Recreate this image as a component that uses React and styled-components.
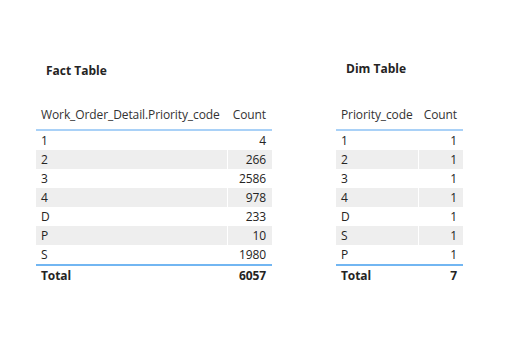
import React from "react";
import styled, { createGlobalStyle } from "styled-components";

const GlobalStyle = createGlobalStyle`
  html, body {
    margin: 0;
    padding: 0;
    background: #ffffff;
  }
  body {
    font-family: "Segoe UI", "Open Sans", "Noto Sans", sans-serif;
    color: #252423;
  }
`;

const factRows = [
  { code: "1", count: 4 },
  { code: "2", count: 266 },
  { code: "3", count: 2586 },
  { code: "4", count: 978 },
  { code: "D", count: 233 },
  { code: "P", count: 10 },
  { code: "S", count: 1980 },
];

const dimRows = [
  { code: "1", count: 1 },
  { code: "2", count: 1 },
  { code: "3", count: 1 },
  { code: "4", count: 1 },
  { code: "D", count: 1 },
  { code: "S", count: 1 },
  { code: "P", count: 1 },
];

// header rows of both tables sit on the same line; only the titles differ
const TableVisual = ({ title, codeLabel, rows, total, width, titleTop }) => (
  <Visual $width={width}>
    <Title $top={titleTop}>{title}</Title>
    <Table $gap={19 + (62 - titleTop)}>
      <thead>
        <tr>
          <HeadCell>{codeLabel}</HeadCell>
          <HeadCell $num>Count</HeadCell>
        </tr>
      </thead>
      <tbody>
        {rows.map((r, i) => (
          <Row key={r.code} $shaded={i % 2 === 1}>
            <Cell>{r.code}</Cell>
            <Cell $num>{r.count}</Cell>
          </Row>
        ))}
      </tbody>
      <tfoot>
        <tr>
          <TotalCell>Total</TotalCell>
          <TotalCell $num>{total}</TotalCell>
        </tr>
      </tfoot>
    </Table>
  </Visual>
);

const App = () => (
  <>
    <GlobalStyle />
    <Page>
      <TableVisual
        title="Fact Table"
        codeLabel="Work_Order_Detail.Priority_code"
        rows={factRows}
        total={6057}
        width={236}
        titleTop={62}
      />
      <TableVisual
        title="Dim Table"
        codeLabel="Priority_code"
        rows={dimRows}
        total={7}
        width={127}
        titleTop={60}
      />
    </Page>
  </>
);

export default App;

const Page = styled.div`
  width: 523px;
  height: 343px;
  display: flex;
  gap: 64px;
  padding-left: 36px;
  box-sizing: border-box;
`;

const Visual = styled.div`
  width: ${(p) => p.$width}px;
  display: flex;
  flex-direction: column;
`;

const Title = styled.div`
  margin-top: ${(p) => p.$top}px;
  margin-left: 10px;
  height: 18px;
  line-height: 18px;
  font-size: 12px;
  font-weight: 700;
  color: #252423;
`;

const Table = styled.table`
  width: 100%;
  margin-top: ${(p) => p.$gap}px;
  border-collapse: collapse;
  font-size: 12px;
  letter-spacing: -0.1px;
  tr > * {
    padding: 0 3px 0 5px;
    white-space: nowrap;
  }
  tr > *:last-child {
    padding: 0 6px 0 4px;
  }
`;

const HeadCell = styled.th`
  height: 31px;
  padding-top: 6px !important;
  box-sizing: border-box;
  vertical-align: top;
  line-height: 19px;
  font-weight: 400;
  color: #333333;
  text-align: ${(p) => (p.$num ? "right" : "left")};
  border-bottom: 2px solid #a9d1f7;
  border-left: ${(p) => (p.$num ? "1px solid #ffffff" : "none")};
`;

const Row = styled.tr`
  background: ${(p) => (p.$shaded ? "#eeeeee" : "#ffffff")};
`;

const Cell = styled.td`
  height: 19px;
  line-height: 19px;
  text-align: ${(p) => (p.$num ? "right" : "left")};
  border-left: ${(p) => (p.$num ? "1px solid #ffffff" : "none")};
`;

const TotalCell = styled.td`
  height: 20px;
  line-height: 20px;
  font-weight: 700;
  text-align: ${(p) => (p.$num ? "right" : "left")};
  border-top: 2px solid #72b6f2;
`;
